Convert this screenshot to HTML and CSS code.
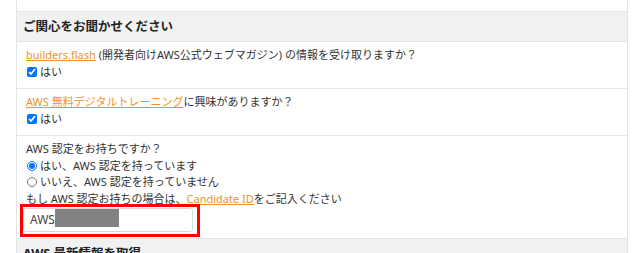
FILE: index.html
```html
<!DOCTYPE html>
<html lang="ja">
<head>
<meta charset="utf-8">
<title>ご関心をお聞かせください</title>
<link rel="stylesheet" href="styles.css">
</head>
<body>
<div class="panel">
  <div class="row row-prev"></div>
  <div class="section-head">ご関心をお聞かせください</div>
  <div class="row">
    <p class="line"><a class="link" href="#">builders.flash</a> (開発者向けAWS公式ウェブマガジン) の情報を受け取りますか？</p>
    <label class="opt"><input class="check" type="checkbox" checked>はい</label>
  </div>
  <div class="row">
    <p class="line"><a class="link" href="#">AWS 無料デジタルトレーニング</a>に興味がありますか？</p>
    <label class="opt"><input class="check" type="checkbox" checked>はい</label>
  </div>
  <div class="row row-cert">
    <p class="line">AWS 認定をお持ちですか？</p>
    <label class="opt"><input class="check" type="radio" name="cert" checked>はい、AWS 認定を持っています</label>
    <label class="opt"><input class="check" type="radio" name="cert">いいえ、AWS 認定を持っていません</label>
    <p class="line">もし AWS 認定お持ちの場合は、<a class="link" href="#">Candidate ID</a>をご記入ください</p>
    <div class="field">
      <div class="input"><span class="val">AWS</span><span class="redact"></span></div>
    </div>
  </div>
  <div class="section-head">AWS 最新情報を取得</div>
</div>
</body>
</html>
```
FILE: styles.css
```css
html, body {
  margin: 0;
  padding: 0;
  background: #ffffff;
  overflow: hidden;
}
body {
  font-family: "Noto Sans", "Noto Sans CJK JP", sans-serif;
  font-size: 11px;
  line-height: 16.5px;
  color: #333333;
  width: 640px;
  height: 253px;
}
.panel {
  margin-left: 16px;
  width: 610px;
  border-left: 1px solid #e4e5e5;
  border-right: 1px solid #e4e5e5;
}
.row {
  border-bottom: 1px solid #e6e6e6;
  padding: 5px 9px 8px;
  height: 33px;
}
.row-prev {
  height: 11px;
  padding: 0;
}
.row-cert {
  height: auto;
  padding-bottom: 6px;
}
.section-head {
  background: #f0f1f1;
  border-bottom: 1px solid #e6e6e6;
  height: 29px;
  line-height: 29px;
  padding: 0 6px;
  font-size: 12.5px;
  font-weight: bold;
  color: #222222;
}
.line {
  margin: 0;
  white-space: nowrap;
}
.link {
  color: #f0922a;
  text-decoration: underline;
}
.opt {
  display: flex;
  align-items: center;
  height: 16.5px;
  white-space: nowrap;
}
.check {
  width: 10px;
  height: 10px;
  margin: 0 3px 0 1px;
  flex: none;
}
.field {
  position: relative;
  width: 170px;
  margin: 1px 0 0 -3px;
}
.field::after {
  content: "";
  position: absolute;
  left: -3px;
  top: -4px;
  right: -7px;
  bottom: -5px;
  border: 3px solid #ff0000;
}
.input {
  box-sizing: border-box;
  height: 24px;
  border: 1px solid #d9d9d9;
  border-radius: 3px;
  display: flex;
  align-items: center;
  padding-left: 6px;
  font-size: 12px;
  color: #444444;
}
.redact {
  align-self: flex-start;
  width: 64px;
  height: 18px;
  background: #828282;
}
```
